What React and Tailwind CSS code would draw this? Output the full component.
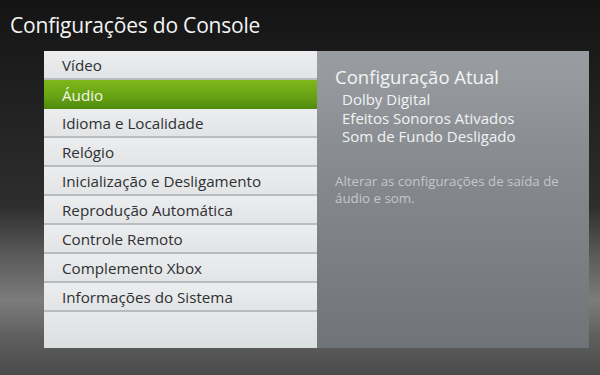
import React from "react";

const items = [
  "Vídeo",
  "Áudio",
  "Idioma e Localidade",
  "Relógio",
  "Inicialização e Desligamento",
  "Reprodução Automática",
  "Controle Remoto",
  "Complemento Xbox",
  "Informações do Sistema",
];

export default function App() {
  return (
    <div
      className="w-[600px] h-[375px] overflow-hidden flex flex-col bg-[linear-gradient(180deg,#141414_0%,#222222_30%,#2e2e2e_55%,#5a5a5a_68%,#7c7c7c_80%,#5e5e5e_90%,#4a4a4a_100%)]"
      style={{ fontFamily: '"Open Sans", "Noto Sans", sans-serif' }}
    >
      <div className="h-[51px] pl-[10px] pt-[11px] text-[21px] leading-[28px] text-[#f4f4f4] tracking-[-0.2px]">
        Configurações do Console
      </div>
      <div className="ml-[44px] w-[545px] h-[297px] flex">
        <div className="w-[273px] h-full flex flex-col bg-[#e3e5e6]">
          {items.map((t, i) => (
            <div
              key={t}
              className={
                i === 1
                  ? "h-[29px] shrink-0 pl-[18px] pt-[2px] flex items-center text-[15.2px] text-[#f2f7e6] bg-[linear-gradient(180deg,#7fb81a_0%,#68a314_55%,#4f8a0d_100%)]"
                  : "h-[29px] shrink-0 pl-[18px] pt-[2px] flex items-center text-[15.2px] text-[#2e3033] bg-[linear-gradient(180deg,#ecedee_0%,#e2e4e5_100%)] border-b-2 border-[#b9bcbf]"
              }
            >
              {t}
            </div>
          ))}
          <div className="flex-1 bg-[linear-gradient(180deg,#e6e8e9_0%,#dcdfe0_100%)]" />
        </div>
        <div className="flex-1 h-full bg-[linear-gradient(180deg,#9a9ea2_0%,#868a8f_40%,#707479_100%)] pl-[18px] pt-[13px]">
          <div className="text-[18.5px] leading-[26px] text-[#f3f4f5]">Configuração Atual</div>
          <div className="pl-[7px] text-[15px] leading-[18.5px] text-[#f1f2f3]">
            <div>Dolby Digital</div>
            <div>Efeitos Sonoros Ativados</div>
            <div>Som de Fundo Desligado</div>
          </div>
          <div className="mt-[27px] text-[13.3px] leading-[17px] text-[#c3c6ca] pr-[14px]">
            Alterar as configurações de saída de áudio e som.
          </div>
        </div>
      </div>
    </div>
  );
}
